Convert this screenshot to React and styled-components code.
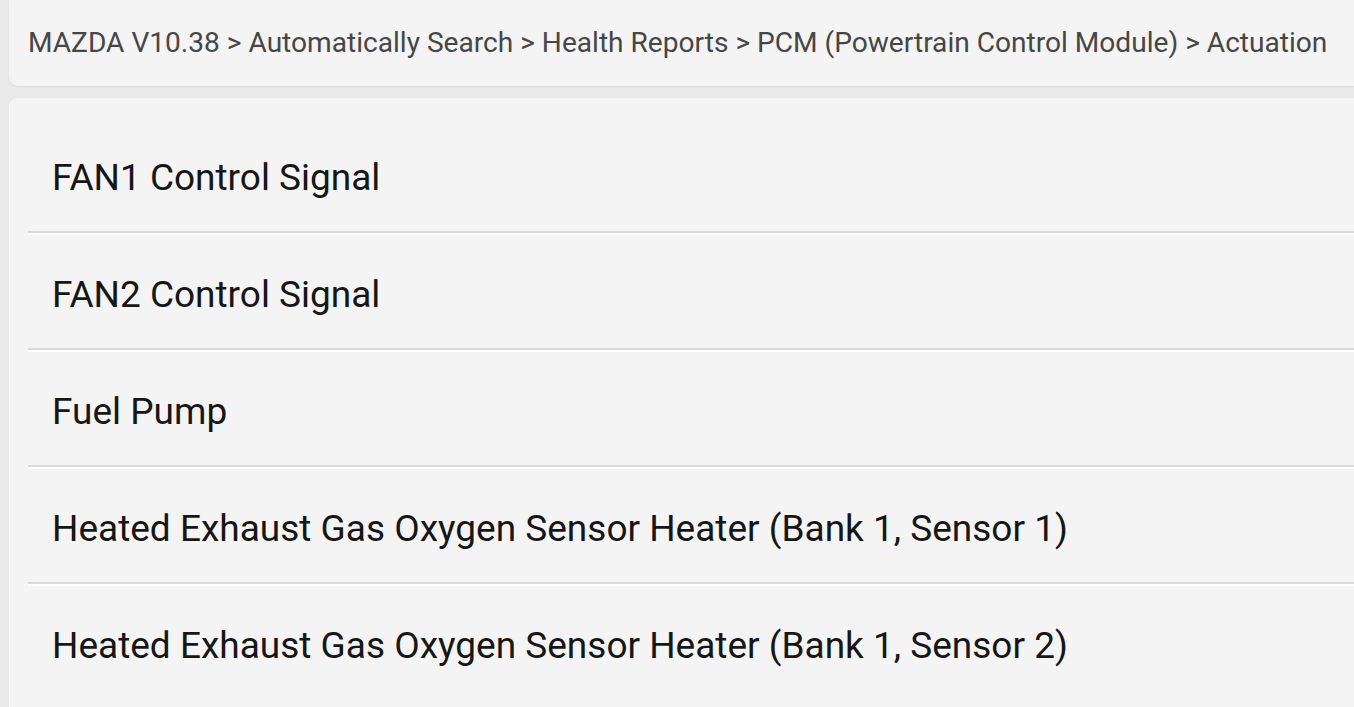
import styled, { createGlobalStyle } from "styled-components";

const GlobalStyle = createGlobalStyle`
  html, body {
    margin: 0;
    padding: 0;
    background: #e9e9e9;
    overflow: hidden;
  }
  * {
    box-sizing: border-box;
  }
`;

const items = [
  "FAN1 Control Signal",
  "FAN2 Control Signal",
  "Fuel Pump",
  "Heated Exhaust Gas Oxygen Sensor Heater (Bank 1, Sensor 1)",
  "Heated Exhaust Gas Oxygen Sensor Heater (Bank 1, Sensor 2)",
];

const App = () => {
  return (
    <Page>
      <GlobalStyle />
      <Breadcrumb>
        MAZDA V10.38 &gt; Automatically Search &gt; Health Reports &gt; PCM
        (Powertrain Control Module) &gt; Actuation
      </Breadcrumb>
      <List>
        {items.map((item) => (
          <Row key={item}>
            <Label>{item}</Label>
          </Row>
        ))}
      </List>
    </Page>
  );
};

export default App;

const Page = styled.div`
  display: flex;
  flex-direction: column;
  gap: 12px;
  height: 707px;
  padding-left: 9px;
  font-family: Roboto, "Noto Sans", sans-serif;
`;

const Breadcrumb = styled.div`
  display: flex;
  align-items: center;
  height: 86px;
  padding: 0 0 2px 19px;
  background: #f4f4f4;
  border-bottom-left-radius: 9px;
  box-shadow: 0 1px 2px rgba(0, 0, 0, 0.06);
  color: #464646;
  font-size: 28.1px;
  white-space: nowrap;
`;

const List = styled.div`
  display: flex;
  flex-direction: column;
  flex: 1;
  padding: 18px 0 0 18px;
  background: #f4f4f4;
  border-top-left-radius: 9px;
  border-left: 1px solid #f9f9f9;
  overflow: hidden;
`;

const Row = styled.div`
  display: flex;
  align-items: center;
  height: 117px;
  flex-shrink: 0;
  padding: 8px 0 0 24px;
  border-bottom: 2px solid #d9d9d9;
  box-shadow: 0 2px 0 #ffffff;

  &:last-child {
    border-bottom-color: transparent;
    box-shadow: none;
  }
`;

const Label = styled.span`
  color: #161616;
  font-size: 37px;
  white-space: nowrap;
`;
